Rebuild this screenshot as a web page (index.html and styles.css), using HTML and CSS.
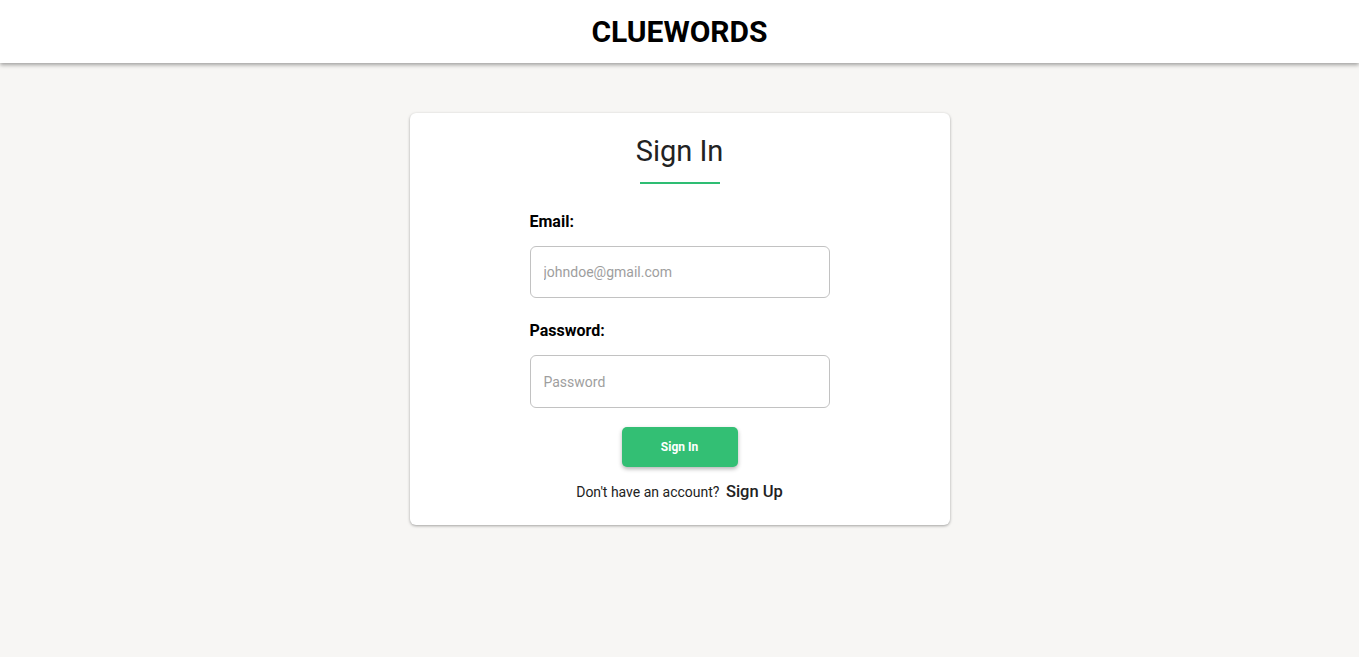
FILE: index.html
```html
<!DOCTYPE html>
<html>
<head>
<meta charset="utf-8">
<title>Cluewords</title>
<link rel="stylesheet" href="styles.css">
</head>
<body>
<header class="topbar">
  <h1 class="brand">CLUEWORDS</h1>
</header>
<main class="page">
  <section class="card">
    <h2 class="card-title">Sign In</h2>
    <div class="title-rule"></div>
    <form class="form">
      <label class="label" for="email">Email:</label>
      <input class="input" id="email" type="email" placeholder="johndoe@gmail.com">
      <label class="label label-pw" for="pw">Password:</label>
      <input class="input" id="pw" type="password" placeholder="Password">
      <button class="btn" type="button">Sign In</button>
      <p class="alt">Don't have an account? <a class="alt-link" href="#">Sign Up</a></p>
    </form>
  </section>
</main>
</body>
</html>
```

FILE: styles.css
```css
* { box-sizing: border-box; }
html, body { margin: 0; padding: 0; }
body {
  font-family: Roboto, "Liberation Sans", sans-serif;
  background: #f7f6f4;
  color: #000;
  min-height: 657px;
}
.topbar {
  height: 63px;
  background: #fff;
  box-shadow: 0 2px 4px rgba(0,0,0,0.35);
  display: flex;
  align-items: center;
  justify-content: center;
  position: relative;
  z-index: 1;
}
.brand {
  margin: 0;
  font-size: 30px;
  font-weight: 700;
  letter-spacing: 0;
  color: #000;
}
.page {
  display: flex;
  justify-content: center;
  padding-top: 50px;
}
.card {
  width: 540px;
  background: #fff;
  border-radius: 6px;
  box-shadow: 0 1px 3px rgba(0,0,0,0.35);
  padding: 20px 0 23px;
  display: flex;
  flex-direction: column;
  align-items: center;
}
.card-title {
  margin: 0;
  font-size: 29px;
  font-weight: 400;
  line-height: 36px;
  color: #222;
}
.title-rule {
  width: 80px;
  height: 2px;
  background: #2ebd73;
  margin-top: 13px;
}
.form {
  width: 300px;
  display: flex;
  flex-direction: column;
  margin-top: 28px;
}
.label {
  font-size: 16px;
  font-weight: 700;
  line-height: 20px;
  color: #000;
}
.label-pw { margin-top: 23px; }
.input {
  margin-top: 14px;
  height: 52px;
  border: 1px solid #c2c2c2;
  border-radius: 6px;
  padding: 0 13px;
  font-family: Roboto, "Liberation Sans", sans-serif;
  font-size: 14px;
  color: #333;
  outline: none;
}
#pw { margin-top: 14px; height: 53px; }
.input::placeholder { color: #9e9e9e; }
.btn {
  align-self: center;
  margin-top: 19px;
  width: 116px;
  height: 40px;
  border: none;
  border-radius: 5px;
  background: #33bf74;
  color: #fff;
  font-family: Roboto, "Liberation Sans", sans-serif;
  font-size: 12px;
  font-weight: 700;
  box-shadow: 0 2px 4px rgba(0,0,0,0.3);
}
.alt {
  margin: 15px 0 0;
  text-align: center;
  font-size: 14px;
  color: #222;
  line-height: 20px;
}
.alt-link {
  margin-left: 3px;
  font-size: 16.5px;
  font-weight: 500;
  color: #222;
  text-decoration: none;
}
```
